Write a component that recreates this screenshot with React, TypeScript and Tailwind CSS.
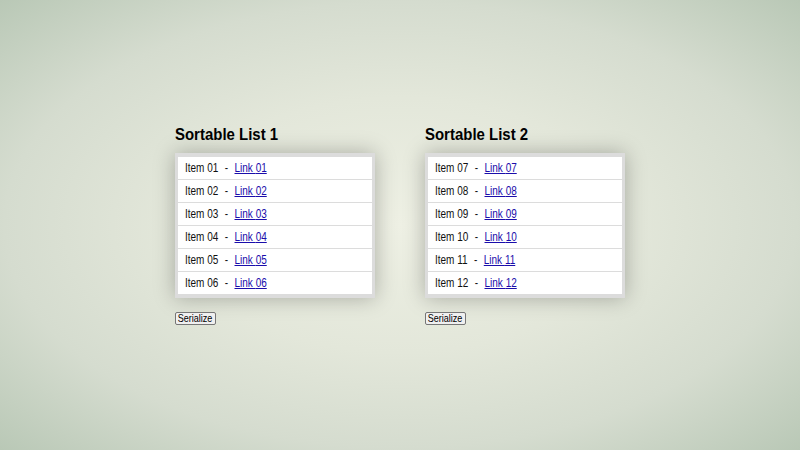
const lists = [
  { title: "Sortable List 1", items: ["01", "02", "03", "04", "05", "06"] },
  { title: "Sortable List 2", items: ["07", "08", "09", "10", "11", "12"] },
];

// the reference face is a narrow sans; squeeze Liberation Sans to match
function SortableList({ title, items }: { title: string; items: string[] }) {
  return (
    <div className="flex w-[200px] flex-col">
      <h2 className="mb-[8px] h-[20px] text-[17px] font-bold leading-[20px] text-black">
        <span className="inline-block origin-left scale-x-[0.88] whitespace-nowrap">{title}</span>
      </h2>
      <ul className="flex flex-col gap-px bg-[#dcdcdc] px-[3px] py-[4px] shadow-[0_0_20px_rgba(0,0,0,0.28)]">
        {items.map((n) => (
          <li key={n} className="flex h-[22px] items-center bg-white pl-[7px] text-[12.5px] text-[#111]">
            <span className="inline-flex origin-left scale-x-[0.8] whitespace-nowrap">
              <span>Item {n}</span>
              <span className="px-[8px]">-</span>
              <a href="#" className="text-[#1a0dab] underline">
                Link {n}
              </a>
            </span>
          </li>
        ))}
      </ul>
      <div className="mt-[14px] flex">
        <button
          type="button"
          className="flex h-[13px] w-[41px] items-center justify-center overflow-hidden rounded-[2px] border border-[#767676] bg-[#f0f0f0] text-[11px] leading-[11px] text-black"
        >
          <span className="inline-block scale-x-[0.82] whitespace-nowrap">Serialize</span>
        </button>
      </div>
    </div>
  );
}

export default function App() {
  return (
    <div className="flex h-[450px] w-[800px] items-center justify-center gap-[50px] bg-[radial-gradient(ellipse_at_center,#eef0e4_0%,#e3e7da_40%,#d5dccf_70%,#b9c8b6_100%)] font-['Liberation_Sans',Arial,sans-serif]">
      {lists.map((l) => (
        <SortableList key={l.title} title={l.title} items={l.items} />
      ))}
    </div>
  );
}
